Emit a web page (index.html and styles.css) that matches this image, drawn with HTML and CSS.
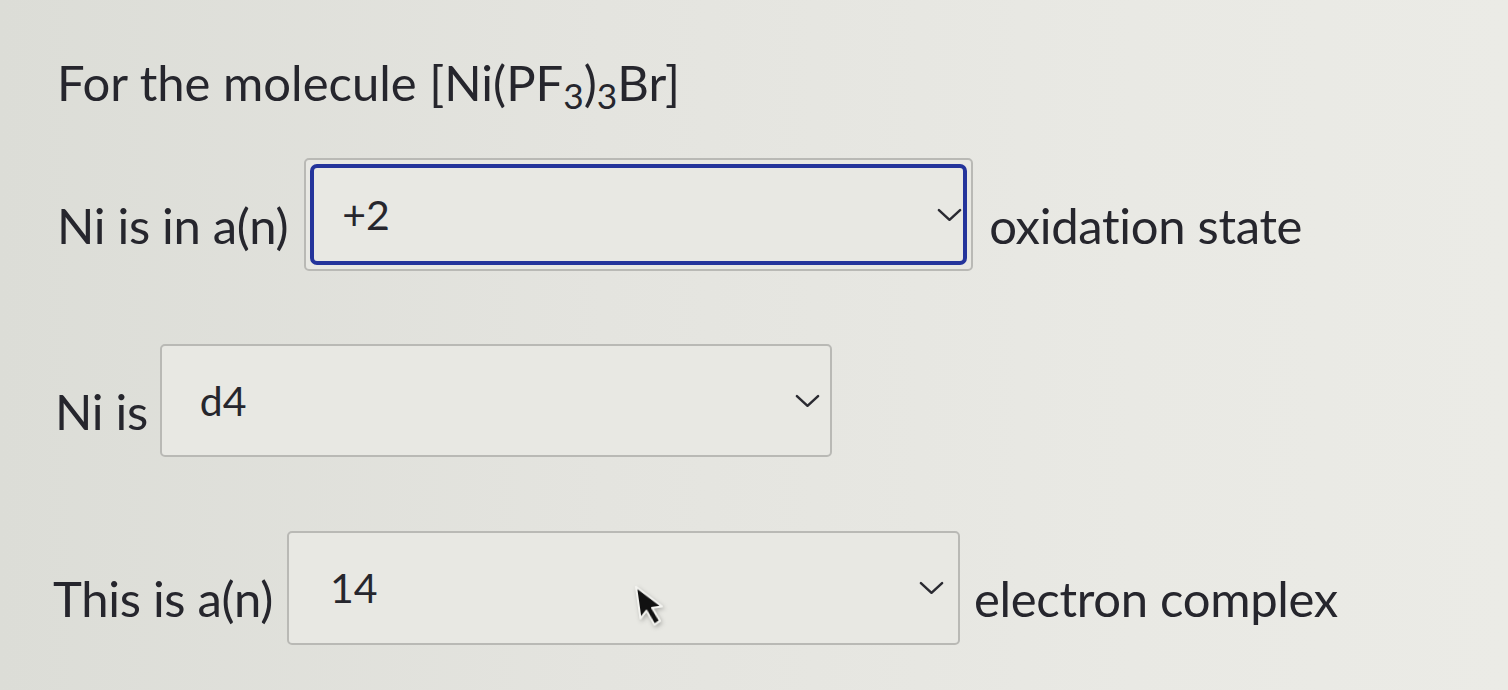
FILE: index.html
```html
<!DOCTYPE html>
<html lang="en">
<head>
<meta charset="utf-8">
<title>Question</title>
<link rel="stylesheet" href="styles.css">
</head>
<body>
<main class="question">
  <h1 class="title">For the molecule [Ni(PF<sub>3</sub>)<sub>3</sub>Br]</h1>

  <div class="row row-one">
    <span class="label">Ni is in a(n)</span>
    <div class="select focused">
      <div class="ring">
        <span class="value">+2</span>
        <svg class="chevron" viewBox="0 0 26 14" aria-hidden="true"><path d="M2 2 L13 12 L24 2"/></svg>
      </div>
    </div>
    <span class="label">oxidation state</span>
  </div>

  <div class="row row-two">
    <span class="label">Ni is</span>
    <div class="select">
      <span class="value">d4</span>
      <svg class="chevron" viewBox="0 0 26 14" aria-hidden="true"><path d="M2 2 L13 12 L24 2"/></svg>
    </div>
  </div>

  <div class="row row-three">
    <span class="label">This is a(n)</span>
    <div class="select">
      <span class="value">14</span>
      <svg class="chevron" viewBox="0 0 26 14" aria-hidden="true"><path d="M2 2 L13 12 L24 2"/></svg>
      <svg class="pointer" viewBox="0 0 30 48" aria-hidden="true">
        <path d="M3 2 L3 34 L10 27 L16 42 L22 39 L16 25 L26 25 Z"/>
      </svg>
    </div>
    <span class="label">electron complex</span>
  </div>
</main>
</body>
</html>
```

FILE: styles.css
```css
html, body {
  margin: 0;
  height: 100%;
}

body {
  background: linear-gradient(90deg, #dcddd7 0%, #e4e4df 40%, #e9e9e4 75%, #ebebe6 100%);
  color: #26262d;
  font-family: Lato, "Open Sans", sans-serif;
  overflow: hidden;
}

.question {
  padding: 52px 0 0 57px;
  display: flex;
  flex-direction: column;
}

.title {
  margin: 0;
  font-size: 49px;
  font-weight: 400;
  line-height: 60px;
}

.title sub {
  font-size: 0.72em;
  vertical-align: -0.22em;
  line-height: 0;
}

.row {
  display: flex;
  align-items: center;
  gap: 16px;
}

.row-one {
  margin-top: 46px;
}

.row-two {
  margin-top: 73px;
  margin-left: -2px;
  gap: 12px;
}

.row-three {
  margin-top: 74px;
  margin-left: -4px;
  gap: 14px;
}

.label {
  font-size: 49px;
  line-height: 58px;
  margin-top: 20px;
  white-space: nowrap;
  letter-spacing: -0.3px;
}

.select {
  position: relative;
  box-sizing: border-box;
  height: 113px;
  width: 672px;
  border: 2px solid #b9b9b5;
  border-radius: 5px;
  background: #e8e8e3;
  display: flex;
  align-items: center;
  padding: 0 10px 0 38px;
}

.row-one .select {
  width: 669px;
  padding: 4px;
}

.row-three .select {
  width: 673px;
  height: 114px;
  padding-left: 41px;
  padding-right: 14px;
}

.ring {
  box-sizing: border-box;
  flex: 1;
  height: 100%;
  border: 4px solid #24349b;
  border-radius: 7px;
  display: flex;
  align-items: center;
  padding: 0 1px 0 28px;
}

.value {
  flex: 1;
  font-size: 41px;
  line-height: 48px;
}

.chevron {
  width: 25px;
  height: 14px;
  fill: none;
  stroke: #2a2a31;
  stroke-width: 2.6;
  stroke-linecap: round;
  stroke-linejoin: round;
}

.pointer {
  position: absolute;
  left: 347px;
  top: 50px;
  width: 30px;
  height: 48px;
  transform: rotate(-8deg);
  filter: drop-shadow(1px 2px 2px rgba(0, 0, 0, 0.25));
}

.pointer path {
  fill: #111;
  stroke: #f4f4f0;
  stroke-width: 2;
  stroke-linejoin: round;
}
```
